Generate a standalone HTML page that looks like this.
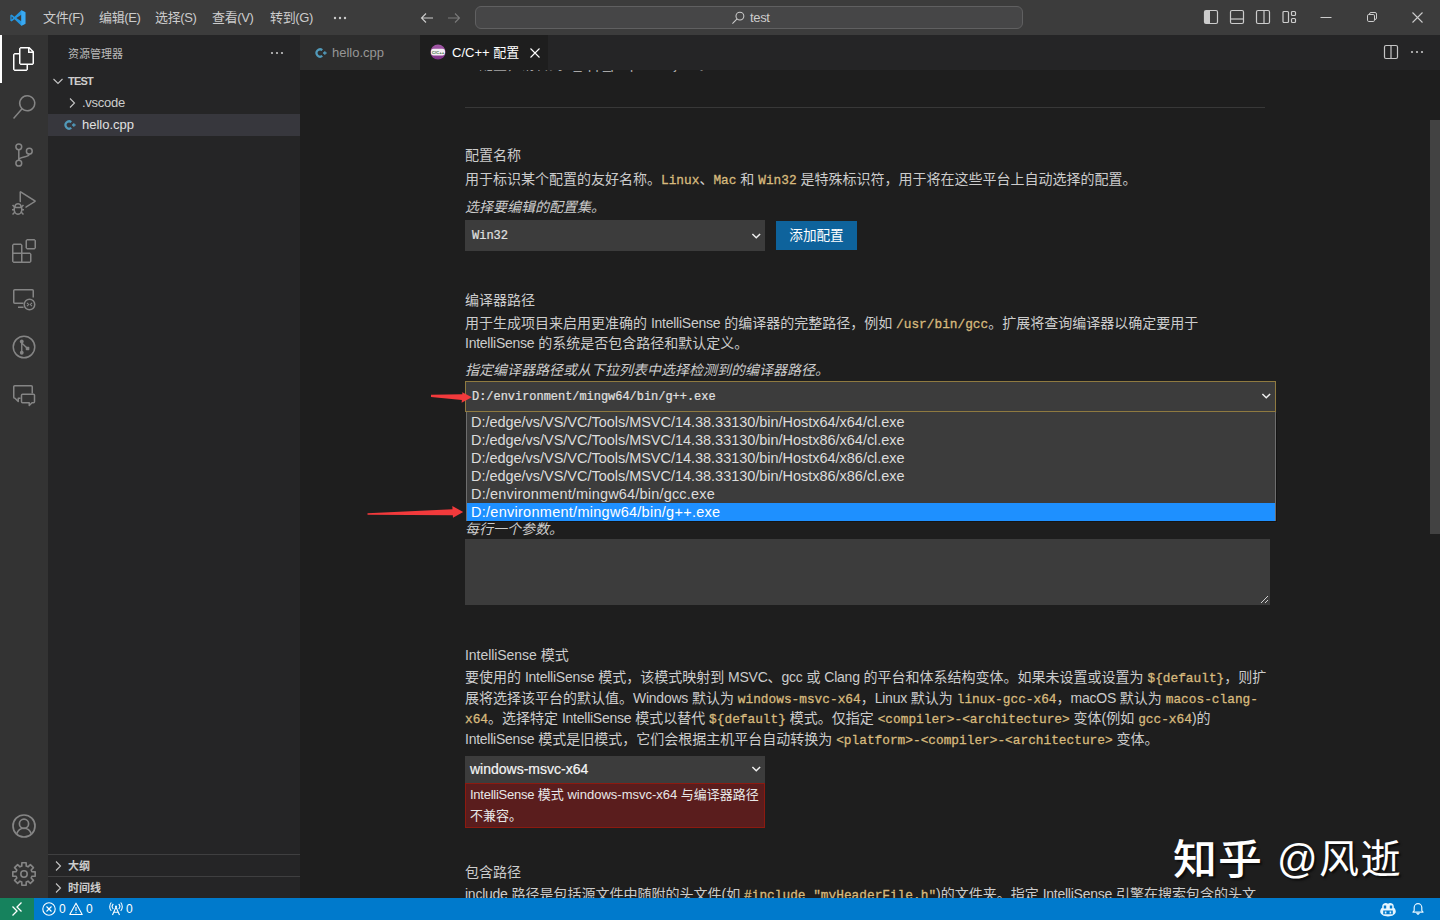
<!DOCTYPE html>
<html lang="zh-CN">
<head>
<meta charset="utf-8">
<title>C/C++ 配置 - test - Visual Studio Code</title>
<style>
*{box-sizing:border-box;margin:0;padding:0}
html,body{width:1440px;height:920px;overflow:hidden;background:#1e1e1e}
body{font-family:"Liberation Sans","Noto Sans CJK SC",sans-serif;font-size:13px;color:#cccccc;position:relative}
.abs{position:absolute}
.mono{font-family:"Liberation Mono","Noto Sans CJK SC",monospace}
svg{display:block}
/* title bar */
#titlebar{left:0;top:0;width:1440px;height:35px;background:#3c3c3c}
#titlebar .menu{top:0;height:35px;line-height:35px;font-size:13px;color:#cccccc;white-space:nowrap;letter-spacing:-0.350px}
#search{left:475px;top:6px;width:548px;height:23px;border-radius:6px;background:#464647;border:1px solid #606061}
/* activity bar */
#activity{left:0;top:35px;width:48px;height:863px;background:#333333}
#activity .ind{left:0;top:0;width:2px;height:48px;background:#ffffff}
/* sidebar */
#sidebar{left:48px;top:35px;width:252px;height:863px;background:#252526}
#sidebar .row{left:0;width:252px;height:22px;line-height:22px;white-space:nowrap}
/* editor */
#tabs{left:300px;top:35px;width:1140px;height:35px;background:#252526}
.tab{top:0;height:35px;line-height:35px;font-size:13px;white-space:nowrap}
#editor{left:300px;top:70px;width:1140px;height:828px;background:#1e1e1e;overflow:hidden}
.t{position:absolute;white-space:nowrap;line-height:20px;height:20px}
.h{font-size:14px;color:#cccccc}
.d{font-size:13px;color:#cccccc}
.i{font-size:13px;color:#cccccc;font-style:italic}
.c{font-family:"Liberation Mono","Noto Sans CJK SC",monospace;color:#d7ba7d;font-size:13px}
.d,.h,.i{font-size:14px}
.l{letter-spacing:-0.250px}
.c{font-size:12.800px;-webkit-text-stroke:0.300px #d7ba7d}
.e{font-size:13px;color:#e8e8e8}
.opt{font-size:14.500px;height:18px;line-height:18px}
/* status */
#status{left:0;top:898px;width:1440px;height:22px;background:#007acc;color:#fff;font-size:12px}
</style>
</head>
<body>
<!-- TITLEBAR -->
<div id="titlebar" class="abs">
<svg class="abs" style="left:10px;top:10px" width="16" height="16" viewBox="0 0 100 100"><path d="M71 2 L96 14 V86 L71 98 L28 58 L10 72 L2 67 V33 L10 28 L28 42 Z M71 30 L40 50 L71 70 Z M10 40 V60 L20 50 Z" fill="#2596e0" fill-rule="evenodd"/><path d="M71 2 L96 14 V86 L71 98 Z" fill="#3aa9f2"/></svg>
<div class="menu abs" style="left:43px">文件(F)</div>
<div class="menu abs" style="left:99px">编辑(E)</div>
<div class="menu abs" style="left:155px">选择(S)</div>
<div class="menu abs" style="left:212px">查看(V)</div>
<div class="menu abs" style="left:270px">转到(G)</div>
<svg class="abs" style="left:332px;top:10px" width="16" height="16" viewBox="0 0 16 16" fill="#cccccc"><circle cx="3" cy="8" r="1.2"/><circle cx="8" cy="8" r="1.2"/><circle cx="13" cy="8" r="1.2"/></svg>
<svg class="abs" style="left:419px;top:10px" width="16" height="16" viewBox="0 0 16 16" fill="none" stroke="#cccccc" stroke-width="1.1"><path d="M14 8H2.5M7 3.5L2.5 8L7 12.5"/></svg>
<svg class="abs" style="left:446px;top:10px" width="16" height="16" viewBox="0 0 16 16" fill="none" stroke="#7a7a7a" stroke-width="1.1"><path d="M2 8H13.5M9 3.5L13.5 8L9 12.5"/></svg>
<div id="search" class="abs"></div>
<svg class="abs" style="left:731px;top:10px" width="15" height="15" viewBox="0 0 16 16" fill="none" stroke="#cccccc" stroke-width="1.1"><circle cx="9.5" cy="6.5" r="4.2"/><path d="M6.5 9.5L1.5 14.5"/></svg>
<div class="menu abs" style="left:750px;font-size:13px">test</div>
<svg class="abs" style="left:1203px;top:9px" width="16" height="16" viewBox="0 0 16 16" fill="none" stroke="#cccccc" stroke-width="1.200"><rect x="1.500" y="1.500" width="13" height="13" rx="1.500"/><path d="M2 2H7V14H2Z" fill="#cccccc" stroke="none"/></svg>
<svg class="abs" style="left:1229px;top:9px" width="16" height="16" viewBox="0 0 16 16" fill="none" stroke="#cccccc" stroke-width="1.200"><rect x="1.500" y="1.500" width="13" height="13" rx="1.500"/><path d="M1.500 10H14.500"/></svg>
<svg class="abs" style="left:1255px;top:9px" width="16" height="16" viewBox="0 0 16 16" fill="none" stroke="#cccccc" stroke-width="1.200"><rect x="1.500" y="1.500" width="13" height="13" rx="1.500"/><path d="M9 1.500V14.500"/></svg>
<svg class="abs" style="left:1281px;top:9px" width="16" height="16" viewBox="0 0 16 16" fill="none" stroke="#cccccc" stroke-width="1.200"><rect x="2" y="2.500" width="5.500" height="11" rx="1"/><rect x="10.500" y="2.500" width="4" height="4" rx="1"/><rect x="10.500" y="9.500" width="4" height="4" rx="1"/></svg>
<svg class="abs" style="left:1320px;top:10px" width="12" height="16" viewBox="0 0 12 16" fill="none" stroke="#cccccc" stroke-width="1"><path d="M0.5 7.5H11.5"/></svg>
<svg class="abs" style="left:1367px;top:12px" width="10" height="10" viewBox="0 0 10 10" fill="none" stroke="#cccccc" stroke-width="1"><rect x="0.500" y="2.500" width="7" height="7" rx="1.300"/><path d="M2.500 2.500V2Q2.500 0.500 4 0.500H8Q9.500 0.500 9.500 2V6Q9.500 7.500 8 7.500H7.500"/></svg>
<svg class="abs" style="left:1412px;top:12px" width="11" height="11" viewBox="0 0 11 11" fill="none" stroke="#cccccc" stroke-width="1.100"><path d="M0.500 0.500L10.500 10.500M10.500 0.500L0.500 10.500"/></svg>
</div>
<!-- ACTIVITY -->
<div id="activity" class="abs"><div class="ind abs"></div>
<svg class="abs" style="left:12px;top:12px" width="24" height="24" viewBox="0 0 24 24" fill="#ffffff" ><path d="M17.5 0h-9L7 1.5V6H2.5L1 7.5v15.07L2.5 24h12.07L16 22.57V18h4.7l1.3-1.43V4.5L17.5 0zm0 2.12l2.38 2.38H17.5V2.12zm-3 20.38h-12v-15H7v9.07L8.500 18h6v4.5zm6-6h-12v-15H16V6h4.5v10.5z"/></svg>
<svg class="abs" style="left:12px;top:60px" width="24" height="24" viewBox="0 0 24 24" fill="#858585" ><path d="M15.25 0a8.250 8.250 0 0 0-6.180 13.720L1 22.880l1.120 1 8.050-9.120A8.251 8.251 0 1 0 15.250.010V0zm0 15a6.750 6.750 0 1 1 0-13.500 6.750 6.750 0 0 1 0 13.500z"/></svg>
<svg class="abs" style="left:12px;top:108px" width="24" height="24" viewBox="0 0 24 24" fill="#858585" ><g fill="none" stroke="#858585" stroke-width="1.5"><circle cx="6.800" cy="3.800" r="2.900"/><circle cx="6.800" cy="20.200" r="2.900"/><circle cx="17.300" cy="8.200" r="2.900"/><path d="M6.800 6.700V17.300M17.300 11.100c0 4-10.500 2-10.500 6.200"/></g></svg>
<svg class="abs" style="left:12px;top:156px" width="24" height="24" viewBox="0 0 24 24" fill="#858585" ><path d="M10.940 13.500l-1.320 1.320a3.730 3.730 0 0 0-7.240 0L1.060 13.500 0 14.560l1.720 1.720-.22.220V18H0v1.500h1.500v.080c.077.489.214.966.410 1.420L0 22.940 1.060 24l1.650-1.650A4.308 4.308 0 0 0 6 24a4.310 4.310 0 0 0 3.290-1.650L10.940 24 12 22.940 10.090 21c.198-.464.336-.951.410-1.450v-.1H12V18h-1.500v-1.500l-.22-.22L12 14.560l-1.060-1.060zM6 13.500a2.250 2.250 0 0 1 2.250 2.250h-4.500A2.250 2.250 0 0 1 6 13.500zm3 6a3.330 3.330 0 0 1-3 3 3.330 3.330 0 0 1-3-3v-2.250h6v2.250zm14.760-9.900v1.260L13.500 17.370V15.600l8.500-5.370L9 2v9.460a5.070 5.070 0 0 0-1.500-.72V.630L8.640 0l15.120 9.600z"/></svg>
<svg class="abs" style="left:12px;top:204px" width="24" height="24" viewBox="0 0 24 24" fill="#858585" ><path d="M13.500 1.500L15 0h7.500L24 1.500V9l-1.500 1.500H15L13.500 9V1.500zm1.500 0V9h7.500V1.500H15zM0 15V6l1.500-1.500H9L10.500 6v7.500H18l1.500 1.500v7.500L18 24H1.500L0 22.500V15zm9-1.500V6H1.500v7.500H9zM9 15H1.500v7.500H9V15zm1.500 7.500H18V15h-7.500v7.500z"/></svg>
<svg class="abs" style="left:12px;top:252px" width="24" height="24" viewBox="0 0 24 24" fill="#858585" ><g fill="none" stroke="#858585" stroke-width="1.500"><path d="M11.500 16.250H2.750a1 1 0 0 1-1-1V3.750a1 1 0 0 1 1-1h17.500a1 1 0 0 1 1 1V10.500"/><path d="M6 20.250h5.500"/><circle cx="17.500" cy="17.500" r="5.250"/><path d="M15 15.800l1.700 1.700-1.700 1.700M20 15.800l-1.700 1.700 1.700 1.700" stroke-width="1.100"/></g></svg>
<svg class="abs" style="left:12px;top:300px" width="24" height="24" viewBox="0 0 24 24" fill="#858585" ><g fill="none" stroke="#858585" stroke-width="1.500"><circle cx="12" cy="12" r="10.750"/><path d="M9.750 7v10.500M9.750 8l5.500 5.250" stroke-width="1.400"/></g><g fill="#858585"><circle cx="9.750" cy="6.500" r="1.900"/><circle cx="9.750" cy="17.750" r="1.900"/><rect x="13.750" y="11.750" width="3.600" height="3.600" rx="0.800"/></g></svg>
<svg class="abs" style="left:12px;top:348px" width="24" height="24" viewBox="0 0 24 24" fill="#858585" ><g fill="none" stroke="#858585" stroke-width="1.500" stroke-linejoin="round"><path d="M8.500 15.250H6.250v3.250l-3.250-3.250H2.750a1 1 0 0 1-1-1V3.750a1 1 0 0 1 1-1h16.500a1 1 0 0 1 1 1V10.500"/><path d="M10.500 11.250h11a1 1 0 0 1 1 1v6.500a1 1 0 0 1-1 1h-1.500l-2.750 2.750V19.750H10.500a1 1 0 0 1-1-1v-6.500a1 1 0 0 1 1-1z"/></g></svg>
<svg class="abs" style="left:12px;top:779px" width="24" height="24" viewBox="0 0 24 24" fill="#858585" ><g fill="none" stroke="#858585" stroke-width="1.700"><circle cx="12" cy="12" r="11"/><circle cx="12" cy="9.750" r="4.600"/><path d="M4.750 19.800c1.200-3.600 4-5.550 7.250-5.550s6.050 1.950 7.250 5.550"/></g></svg>
<svg class="abs" style="left:12px;top:827px" width="24" height="24" viewBox="0 0 24 24" fill="#858585" ><g fill="none" stroke="#858585" stroke-width="1.600" stroke-linejoin="round"><path d="M9.77 4.11 L9.85 0.81 L14.15 0.81 L14.23 4.11 L16.01 4.85 L18.39 2.56 L21.44 5.61 L19.15 7.99 L19.89 9.77 L23.19 9.85 L23.19 14.15 L19.89 14.23 L19.15 16.01 L21.44 18.39 L18.39 21.44 L16.01 19.15 L14.23 19.89 L14.15 23.19 L9.85 23.19 L9.77 19.89 L7.99 19.15 L5.61 21.44 L2.56 18.39 L4.85 16.01 L4.11 14.23 L0.81 14.15 L0.81 9.85 L4.11 9.77 L4.85 7.99 L2.56 5.61 L5.61 2.56 L7.99 4.85Z"/><circle cx="12" cy="12" r="3.200"/></g></svg>
</div>
<!-- SIDEBAR -->
<div id="sidebar" class="abs">
<div class="abs" style="left:20px;top:9px;height:20px;line-height:20px;font-size:11px;color:#bbbbbb;white-space:nowrap">资源管理器</div>
<svg class="abs" style="left:221px;top:10px" width="16" height="16" viewBox="0 0 16 16" fill="#c5c5c5"><circle cx="3" cy="8" r="1.100"/><circle cx="8" cy="8" r="1.100"/><circle cx="13" cy="8" r="1.100"/></svg>
<svg class="abs" style="left:2px;top:38px" width="16" height="16" viewBox="0 0 16 16" fill="none" stroke="#c5c5c5" stroke-width="1.1"><path d="M3.500 6L8 10.500L12.500 6"/></svg>
<div class="row abs" style="top:35px;padding-left:20px;font-size:11px;font-weight:bold;color:#cccccc;letter-spacing:-0.800px">TEST</div>
<svg class="abs" style="left:16px;top:60px" width="16" height="16" viewBox="0 0 16 16" fill="none" stroke="#c5c5c5" stroke-width="1.1"><path d="M6 3.500L10.500 8L6 12.500"/></svg>
<div class="row abs" style="top:57px;padding-left:34px;font-size:13px;color:#cccccc;letter-spacing:-0.250px">.vscode</div>
<div class="row abs" style="top:79px;background:#37373d"></div>
<svg class="abs" style="left:15px;top:83px" width="14" height="14" viewBox="0 0 14 14" fill="none" stroke="#519aba"><path d="M8.300 4.100A3.600 3.600 0 1 0 8.300 9.900" stroke-width="2.200"/><path d="M10.800 5.200v3.600M9 7h3.600" stroke-width="1.300"/></svg>
<div class="row abs" style="top:79px;padding-left:34px;font-size:13px;color:#e0e0e0">hello.cpp</div>
<div class="abs" style="left:0;top:819px;width:252px;height:1px;background:#3f3f40"></div>
<svg class="abs" style="left:2px;top:823px" width="16" height="16" viewBox="0 0 16 16" fill="none" stroke="#c5c5c5" stroke-width="1.1"><path d="M6 3.500L10.500 8L6 12.500"/></svg>
<div class="row abs" style="top:820px;padding-left:20px;font-size:11px;font-weight:bold;color:#cccccc">大纲</div>
<div class="abs" style="left:0;top:841px;width:252px;height:1px;background:#3f3f40"></div>
<svg class="abs" style="left:2px;top:845px" width="16" height="16" viewBox="0 0 16 16" fill="none" stroke="#c5c5c5" stroke-width="1.1"><path d="M6 3.500L10.500 8L6 12.500"/></svg>
<div class="row abs" style="top:842px;padding-left:20px;font-size:11px;font-weight:bold;color:#cccccc">时间线</div>
</div>
<!-- TABS -->
<div id="tabs" class="abs">
<div class="tab abs" style="left:0;width:120px;background:#2d2d2d"></div>
<svg class="abs" style="left:14px;top:11px" width="14" height="14" viewBox="0 0 14 14" fill="none" stroke="#519aba"><path d="M8.300 4.100A3.600 3.600 0 1 0 8.300 9.900" stroke-width="2.200"/><path d="M10.800 5.200v3.600M9 7h3.600" stroke-width="1.300"/></svg>
<div class="tab abs" style="left:32px;color:#969696">hello.cpp</div>
<div class="tab abs" style="left:120px;width:128px;background:#1e1e1e"></div>
<svg class="abs" style="left:130px;top:9px" width="16" height="16" viewBox="0 0 16 16"><defs><linearGradient id="pg" x1="0" y1="0" x2="0" y2="1"><stop offset="0" stop-color="#a45aa8"/><stop offset="1" stop-color="#7d2f86"/></linearGradient></defs><circle cx="8" cy="8" r="7.600" fill="url(#pg)"/><rect x="1" y="4.800" width="14" height="6.600" rx="2.600" fill="#f4f0f4"/><text x="8" y="9.700" font-size="4.400" font-weight="bold" text-anchor="middle" fill="#3d6b3d" font-family="Liberation Sans, sans-serif">C/C++</text></svg>
<div class="tab abs" style="left:152px;color:#ffffff">C/C++ 配置</div>
<svg class="abs" style="left:227px;top:10px" width="16" height="16" viewBox="0 0 16 16" fill="none" stroke="#ffffff" stroke-width="1.100"><path d="M3.500 3.500L12.500 12.500M12.500 3.500L3.500 12.500"/></svg>
<svg class="abs" style="left:1083px;top:9px" width="16" height="16" viewBox="0 0 16 16" fill="none" stroke="#c5c5c5" stroke-width="1.200"><rect x="1.500" y="1.500" width="13" height="13" rx="1.500"/><path d="M8 1.500V14.500"/></svg>
<svg class="abs" style="left:1109px;top:9px" width="16" height="16" viewBox="0 0 16 16" fill="#c5c5c5"><circle cx="3" cy="8" r="1.100"/><circle cx="8" cy="8" r="1.100"/><circle cx="13" cy="8" r="1.100"/></svg>
</div>
<!-- EDITOR -->
<div id="editor" class="abs">
<div class="t d" style="left:165px;top:-16.500px;color:#a8a8a8">个配置，请转到 <span class="l">c_cpp_properties.json</span>。</div>
<div class="abs" style="left:165px;top:37px;width:800px;height:1px;background:#383838"></div>
<div class="t h" style="left:165px;top:75.2px;">配置名称</div>
<div class="t d" style="left:165px;top:98.5px;">用于标识某个配置的友好名称。<span class="c">Linux</span>、<span class="c">Mac</span> 和 <span class="c">Win32</span> 是特殊标识符，用于将在这些平台上自动选择的配置。</div>
<div class="t i" style="left:165px;top:127.0px;">选择要编辑的配置集。</div>
<div class="abs" style="left:165px;top:150px;width:300px;height:31px;background:#3c3c3c"></div>
<div class="t mono" style="left:172px;top:155.5px;font-size:12px;color:#e0e0e0;-webkit-text-stroke:0.200px #e0e0e0">Win32</div>
<svg class="abs" style="left:448px;top:158px" width="16" height="16" viewBox="0 0 16 16" fill="none" stroke="#f0f0f0" stroke-width="1.500"><path d="M4.400 6L8.250 9.800L12.100 6"/></svg>
<div class="abs" style="left:476px;top:151px;width:81px;height:29px;background:#0e639c;color:#ffffff;font-size:13.600px;line-height:29px;text-align:center;white-space:nowrap">添加配置</div>
<div class="t h" style="left:165px;top:219.6px;">编译器路径</div>
<div class="t d" style="left:165px;top:242.9px;">用于生成项目来启用更准确的 <span class="l">IntelliSense</span> 的编译器的完整路径，例如 <span class="c">/usr/bin/gcc</span>。扩展将查询编译器以确定要用于</div>
<div class="t d" style="left:165px;top:263.3px;"><span class="l">IntelliSense</span> 的系统是否包含路径和默认定义。</div>
<div class="t i" style="left:165px;top:289.6px;">指定编译器路径或从下拉列表中选择检测到的编译器路径。</div>
<div class="abs" style="left:165px;top:310.500px;width:811px;height:31px;background:#3c3c3c;border:1px solid #8f7a40"></div>
<div class="t mono" style="left:172px;top:317px;font-size:11.950px;color:#e0e0e0;-webkit-text-stroke:0.200px #e0e0e0">D:/environment/mingw64/bin/g++.exe</div>
<svg class="abs" style="left:958px;top:318px" width="16" height="16" viewBox="0 0 16 16" fill="none" stroke="#f0f0f0" stroke-width="1.500"><path d="M4.400 6L8.250 9.800L12.100 6"/></svg>
<div class="t i" style="left:165px;top:449.0px;">每行一个参数。</div>
<div class="abs" style="left:165px;top:469px;width:805px;height:66px;background:#3c3c3c"></div>
<svg class="abs" style="left:959px;top:524px" width="10" height="10" viewBox="0 0 10 10" stroke="#d0d0d0" stroke-width="1"><path d="M2 9L9 2M6 9L9 6"/></svg>
<div class="abs" style="left:166px;top:342px;width:810px;height:109px;background:#3c3c3c;border-left:1px solid #6e6e6e;border-right:1px solid #6e6e6e;box-shadow:1px 1px 0 #141414"></div>
<div class="t opt" style="left:171px;top:343px;color:#dcdcdc;letter-spacing:-0.026px">D:/edge/vs/VS/VC/Tools/MSVC/14.38.33130/bin/Hostx64/x64/cl.exe</div>
<div class="t opt" style="left:171px;top:361px;color:#dcdcdc;letter-spacing:-0.026px">D:/edge/vs/VS/VC/Tools/MSVC/14.38.33130/bin/Hostx86/x64/cl.exe</div>
<div class="t opt" style="left:171px;top:379px;color:#dcdcdc;letter-spacing:-0.026px">D:/edge/vs/VS/VC/Tools/MSVC/14.38.33130/bin/Hostx64/x86/cl.exe</div>
<div class="t opt" style="left:171px;top:397px;color:#dcdcdc;letter-spacing:-0.026px">D:/edge/vs/VS/VC/Tools/MSVC/14.38.33130/bin/Hostx86/x86/cl.exe</div>
<div class="t opt" style="left:171px;top:415px;color:#dcdcdc;letter-spacing:0.180px">D:/environment/mingw64/bin/gcc.exe</div>
<div class="abs" style="left:167px;top:433px;width:808px;height:18px;background:#1e90ff"></div>
<div class="t opt" style="left:171px;top:433px;color:#ffffff;letter-spacing:0.270px">D:/environment/mingw64/bin/g++.exe</div>
<svg class="abs" style="left:60px;top:315px" width="120" height="140" viewBox="360 385 120 140" fill="#f23a3c"><path d="M431 394.700L462.300 394.300L462.300 392.200L471.800 397.200L461.600 402.700L461.900 400L431 397Z"/><path d="M367.500 513.300L452.500 509.300L452.300 506L463.200 512L453 517.700L452.800 515.300L367.500 514.800Z"/></svg>
<div class="t h" style="left:165px;top:574.6px;"><span style="letter-spacing:-0.050px">IntelliSense</span> 模式</div>
<div class="t d" style="left:165px;top:597.3px;">要使用的 <span class="l">IntelliSense</span> 模式，该模式映射到 <span class="l">MSVC</span>、<span class="l">gcc</span> 或 <span class="l">Clang</span> 的平台和体系结构变体。如果未设置或设置为 <span class="c">${default}</span>，则扩</div>
<div class="t d" style="left:165px;top:617.8px;">展将选择该平台的默认值。<span class="l">Windows</span> 默认为 <span class="c">windows-msvc-x64</span>，<span class="l">Linux</span> 默认为 <span class="c">linux-gcc-x64</span>，<span class="l">macOS</span> 默认为 <span class="c">macos-clang-</span></div>
<div class="t d" style="left:165px;top:638.1px;"><span class="c">x64</span>。选择特定 <span class="l">IntelliSense</span> 模式以替代 <span class="c">${default}</span> 模式。仅指定 <span class="c">&lt;compiler&gt;-&lt;architecture&gt;</span> 变体(例如 <span class="c">gcc-x64</span>)的</div>
<div class="t d" style="left:165px;top:658.5px;"><span class="l">IntelliSense</span> 模式是旧模式，它们会根据主机平台自动转换为 <span class="c">&lt;platform&gt;-&lt;compiler&gt;-&lt;architecture&gt;</span> 变体。</div>
<div class="abs" style="left:165px;top:686px;width:300px;height:27px;background:#3c3c3c"></div>
<div class="t" style="left:170px;top:689px;font-size:14px;color:#f4f4f4;-webkit-text-stroke:0.200px #f4f4f4">windows-msvc-x64</div>
<svg class="abs" style="left:448px;top:691px" width="16" height="16" viewBox="0 0 16 16" fill="none" stroke="#f0f0f0" stroke-width="1.500"><path d="M4.400 6L8.250 9.800L12.100 6"/></svg>
<div class="abs" style="left:165px;top:713px;width:300px;height:44.500px;background:#5a1d1d;border:1px solid #8c1a10"></div>
<div class="t e" style="left:170px;top:715.4px;"><span class="l">IntelliSense</span> 模式 windows-msvc-x64 与编译器路径</div>
<div class="t e" style="left:170px;top:736.0px;">不兼容。</div>
<div class="t h" style="left:165px;top:792.0px;">包含路径</div>
<div class="t d" style="left:165px;top:814.0px;"><span class="l">include</span> 路径是包括源文件中随附的头文件(如 <span class="c">#include "myHeaderFile.h"</span>)的文件夹。指定 <span class="l">IntelliSense</span> 引擎在搜索包含的头文</div>
<div class="abs" style="left:1130px;top:50px;width:10px;height:414px;background:#424242"></div>
</div>
<!-- STATUS -->
<div id="status" class="abs">
<div class="abs" style="left:0;top:0;width:34px;height:22px;background:#16825d"></div>
<svg class="abs" style="left:9px;top:3px" width="16" height="16" viewBox="0 0 16 16" fill="none" stroke="#ffffff" stroke-width="1.300"><path d="M3.500 5.500L8 10L3.500 14.500M12.500 1.500L8 6L12.500 10.500"/></svg>
<svg class="abs" style="left:42px;top:4px" width="14" height="14" viewBox="0 0 14 14" fill="none" stroke="#ffffff" stroke-width="1.100"><circle cx="7" cy="7" r="6.200"/><path d="M4.500 4.500L9.500 9.500M9.500 4.500L4.500 9.500"/></svg>
<div class="abs" style="left:59px;top:0;line-height:22px;font-size:12px">0</div>
<svg class="abs" style="left:69px;top:4px" width="14" height="14" viewBox="0 0 14 14" fill="none" stroke="#ffffff" stroke-width="1.100" stroke-linejoin="round"><path d="M7 1.200L13.200 12.500H0.800Z"/><path d="M7 5V9M7 10.200V11.300"/></svg>
<div class="abs" style="left:86px;top:0;line-height:22px;font-size:12px">0</div>
<svg class="abs" style="left:109px;top:4px" width="14" height="14" viewBox="0 0 14 14" fill="none" stroke="#ffffff" stroke-width="1.100"><path d="M3.500 13L7 5L10.500 13M4.800 10.300H9.200"/><circle cx="7" cy="4.500" r="1" fill="#fff" stroke="none"/><path d="M4.300 7A3.600 3.600 0 0 1 4.300 2M9.700 7A3.600 3.600 0 0 0 9.700 2M2.300 8.800A6.200 6.200 0 0 1 2.300 0.500M11.700 8.800A6.200 6.200 0 0 0 11.700 0.500"/></svg>
<div class="abs" style="left:126px;top:0;line-height:22px;font-size:12px">0</div>
<svg class="abs" style="left:1380px;top:5px" width="16" height="14" viewBox="0 0 16 14" fill="#e6f6ff"><path fill-rule="evenodd" d="M8 0.800c-1-.9-3.200-1-4.500 0C2.300 1.700 2 3.200 2.300 4.500 1 5.500 0.200 7 0.200 8.600 0.200 11.600 3.700 13.500 8 13.500s7.800-1.900 7.800-4.900c0-1.600-.8-3.100-2.100-4.100.3-1.300 0-2.800-1.200-3.700C11.200-.2 9 -.1 8 .8zM3.800 2.600h2.400v2.800H3.800zM9.800 2.600h2.400v2.800H9.800zM3.200 7.600h9.600v3.600H3.200zM4.800 8.400v2h1.600v-2zM9.600 8.400v2h1.600v-2z"/></svg>
<svg class="abs" style="left:1411px;top:4px" width="14" height="14" viewBox="0 0 14 14" fill="none" stroke="#e6f6ff" stroke-width="1.200" stroke-linejoin="round"><path d="M2 10.200L3.200 8.500V5.500A3.800 3.800 0 0 1 10.800 5.500V8.500L12 10.200Z"/><path d="M5.500 10.800L7 12.300L8.500 10.800" /></svg>
</div>
<!-- WATERMARK -->
<div class="abs" style="left:1173px;top:830px;height:60px;line-height:60px;font-size:41px;font-weight:500;color:#ffffff;white-space:nowrap;letter-spacing:1px;transform:scaleX(1.070);transform-origin:0 0;text-shadow:2px 2px 2px rgba(0,0,0,0.600)">知乎</div>
<div class="abs" style="left:1277px;top:829px;height:60px;line-height:60px;font-size:40px;color:#ffffff;white-space:nowrap;letter-spacing:1.500px;text-shadow:2px 2px 2px rgba(0,0,0,0.600)">@风逝</div>
</body>
</html>
